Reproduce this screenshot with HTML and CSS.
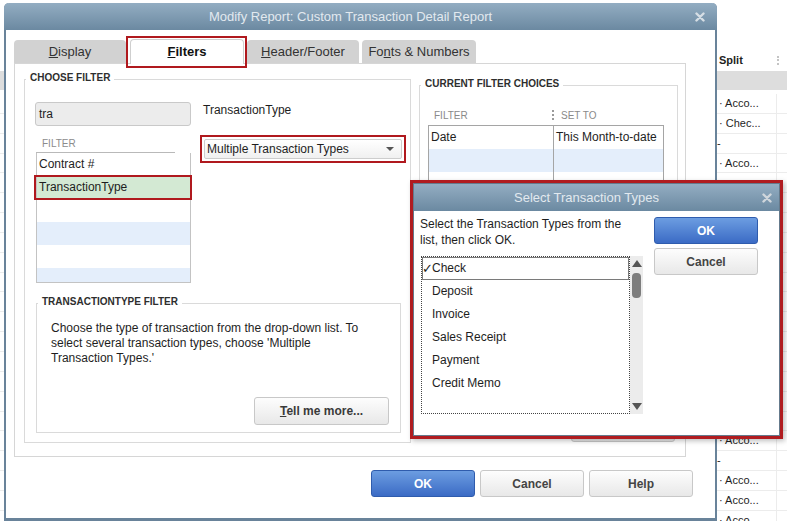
FILE: index.html
```html
<!DOCTYPE html>
<html lang="en">
<head>
<meta charset="UTF-8">
<meta name="viewport" content="width=device-width, initial-scale=1.0">
<title>Modify Report: Custom Transaction Detail Report</title>
<link rel="stylesheet" href="styles.css">
</head>
<body>

<!-- the report behind the dialogs, only its Split column is left uncovered -->
<div class="report">
    <div class="report-head"><span></span><span class="split">Split</span><span class="grip"></span></div>
    <div class="report-band"></div>
    <div class="report-row"><span></span><span class="split">· Acco...</span><span></span></div>
    <div class="report-row"><span></span><span class="split">· Chec...</span><span></span></div>
    <div class="report-row"><span></span><span class="split dash">-</span><span></span></div>
    <div class="report-row"><span></span><span class="split">· Acco...</span><span></span></div>
    <div class="report-row"><span></span><span class="split"></span><span></span></div>
    <div class="report-row"><span></span><span class="split"></span><span></span></div>
    <div class="report-row"><span></span><span class="split"></span><span></span></div>
    <div class="report-row"><span></span><span class="split"></span><span></span></div>
    <div class="report-row"><span></span><span class="split"></span><span></span></div>
    <div class="report-row"><span></span><span class="split"></span><span></span></div>
    <div class="report-row"><span></span><span class="split"></span><span></span></div>
    <div class="report-row"><span></span><span class="split"></span><span></span></div>
    <div class="report-row"><span></span><span class="split"></span><span></span></div>
    <div class="report-row"><span></span><span class="split"></span><span></span></div>
    <div class="report-row"><span></span><span class="split"></span><span></span></div>
    <div class="report-row"><span></span><span class="split"></span><span></span></div>
    <div class="report-row"><span></span><span class="split"></span><span></span></div>
    <div class="report-row"><span></span><span class="split">· Acco...</span><span></span></div>
    <div class="report-row"><span></span><span class="split dash">-</span><span></span></div>
    <div class="report-row"><span></span><span class="split">· Acco...</span><span></span></div>
    <div class="report-row"><span></span><span class="split">· Acco...</span><span></span></div>
    <div class="report-row"><span></span><span class="split">· Acco...</span><span></span></div>
</div>

<div class="window modify">
    <div class="titlebar">
        <span class="title">Modify Report: Custom Transaction Detail Report</span>
        <span class="close"><svg width="10" height="10" viewBox="0 0 10 10"><path d="M1.5 1.5 8.5 8.5M8.5 1.5 1.5 8.5" stroke="#d6dee5" stroke-width="2.4" stroke-linecap="round"/></svg></span>
    </div>
    <div class="window-body">
        <div class="tabs">
            <div class="tab"><u>D</u>isplay</div>
            <div class="tab active"><u>F</u>ilters</div>
            <div class="tab"><u>H</u>eader/Footer</div>
            <div class="tab">Fo<u>n</u>ts &amp; Numbers</div>
        </div>

        <div class="panel">
            <div class="group choose">
                <div class="group-title">CHOOSE FILTER</div>
                <div class="choose-grid">
                    <div>
                        <div class="search">tra</div>
                        <div class="list-head">FILTER</div>
                        <div class="filter-list">
                            <div class="row">Contract #</div>
                            <div class="row picked">TransactionType</div>
                            <div class="row"></div>
                            <div class="row alt"></div>
                            <div class="row"></div>
                            <div class="row alt last"></div>
                        </div>
                    </div>
                    <div>
                        <div class="value-label">TransactionType</div>
                        <div class="combo-mark">
                            <div class="combo">Multiple Transaction Types<span class="caret"></span></div>
                        </div>
                    </div>
                </div>
                <div class="group help-group">
                    <div class="group-title">TRANSACTIONTYPE FILTER</div>
                    <p class="help-text">Choose the type of transaction from the drop-down list. To<br>select several transaction types, choose 'Multiple<br>Transaction Types.'</p>
                    <div class="btn tell"><span><u>T</u>ell me more...</span></div>
                </div>
            </div>

            <div class="current-col">
                <div class="group choices">
                    <div class="group-title">CURRENT FILTER CHOICES</div>
                    <div class="choice-head"><span>FILTER</span><span class="set-to">SET TO</span></div>
                    <div class="choice-table">
                        <div class="choice-row"><span>Date</span><span>This Month-to-date</span></div>
                        <div class="choice-row alt"><span></span><span></span></div>
                        <div class="choice-row"><span></span><span></span></div>
                        <div class="choice-row alt"><span></span><span></span></div>
                        <div class="choice-row"><span></span><span></span></div>
                        <div class="choice-row alt"><span></span><span></span></div>
                        <div class="choice-row"><span></span><span></span></div>
                        <div class="choice-row alt"><span></span><span></span></div>
                        <div class="choice-row"><span></span><span></span></div>
                        <div class="choice-row alt"><span></span><span></span></div>
                        <div class="choice-row"><span></span><span></span></div>
                    </div>
                </div>
                <div class="btn remove">Remove Selected Filter</div>
            </div>
        </div>

        <div class="footer">
            <div class="btn primary">OK</div>
            <div class="btn">Cancel</div>
            <div class="btn">Help</div>
        </div>
    </div>
</div>

<div class="popup-mark">
    <div class="window types">
        <div class="titlebar">
            <span class="title">Select Transaction Types</span>
            <span class="close"><svg width="10" height="10" viewBox="0 0 10 10"><path d="M1.5 1.5 8.5 8.5M8.5 1.5 1.5 8.5" stroke="#cfd6dc" stroke-width="2.4" stroke-linecap="round"/></svg></span>
        </div>
        <div class="types-body">
            <div class="types-left">
                <p class="types-text">Select the Transaction Types from the<br>list, then click OK.</p>
                <div class="type-list">
                    <div class="type-items">
                        <div class="type-item selected"><span class="tick">✓</span>Check</div>
                        <div class="type-item"><span class="tick"></span>Deposit</div>
                        <div class="type-item"><span class="tick"></span>Invoice</div>
                        <div class="type-item"><span class="tick"></span>Sales Receipt</div>
                        <div class="type-item"><span class="tick"></span>Payment</div>
                        <div class="type-item"><span class="tick"></span>Credit Memo</div>
                    </div>
                    <div class="type-scroll">
                        <span class="arrow-up"></span>
                        <span class="thumb"></span>
                        <span class="arrow-down"></span>
                    </div>
                </div>
            </div>
            <div class="types-right">
                <div class="btn primary">OK</div>
                <div class="btn">Cancel</div>
            </div>
        </div>
    </div>
</div>

</body>
</html>
```

FILE: styles.css
```css
body {
    margin: 0;
    width: 787px;
    height: 521px;
    overflow: hidden;
    position: relative;
    background: #fff;
    color: #1e1e1e;
    font-family: "Liberation Sans", Arial, sans-serif;
    font-size: 12px;
}

/* report in the back */
.report {
    padding-top: 49px;
}

.report-head,
.report-row {
    display: grid;
    grid-template-columns: 1fr 61px 10px;
}

.report-head {
    height: 22px;
    align-items: center;
    font-size: 11px;
    font-weight: bold;
}

.report-head .grip {
    width: 0;
    height: 9px;
    border-left: 2px dotted #c4c4c4;
}

.report-band {
    height: 19px;
    margin-bottom: 4px;
    background: #dddddd;
}

.report-row {
    height: 19.85px;
    box-sizing: border-box;
    border-bottom: 1px solid #ececec;
    line-height: 19px;
    font-size: 11px;
}

.split {
    padding-left: 3px;
    white-space: nowrap;
}

.report-row .split {
    border-right: 1px solid #ececec;
}

.split.dash {
    padding-left: 1px;
}

/* windows */
.window {
    background: #fff;
    box-sizing: border-box;
}

.modify {
    position: absolute;
    left: 4px;
    top: 3px;
    width: 713px;
    height: 518px;
    border: 2px solid #69839a;
    border-top: 0;
    border-bottom-width: 3px;
    border-radius: 5px 5px 0 0;
}

.titlebar {
    display: flex;
    align-items: center;
    height: 27px;
    padding-left: 7px;
    background: linear-gradient(#93adc2, #6b89a1);
    color: #e2e9ef;
    font-size: 13px;
}

.modify .titlebar {
    margin: 0 -2px;
    border-radius: 5px 5px 0 0;
}

.title {
    flex: 1;
    text-align: center;
}

.close {
    display: flex;
    justify-content: center;
    width: 20px;
    margin-right: 7px;
}

.window-body {
    padding-top: 9px;
}

/* tabs */
.tabs {
    display: flex;
    align-items: flex-end;
    height: 24px;
    margin-left: 8px;
}

.tab {
    width: 112px;
    height: 23px;
    margin-left: 3px;
    box-sizing: border-box;
    border-radius: 4px 4px 0 0;
    background: #d2d2d2;
    color: #333;
    font-size: 13px;
    line-height: 23px;
    text-align: center;
}

.tab:first-child {
    margin-left: 0;
}

.tab:last-child {
    width: 114px;
}

.tab.active {
    position: relative;
    z-index: 1;
    width: 114px;
    height: 25px;
    margin-left: 4px;
    margin-bottom: -1px;
    border: 1px solid #cfcfcf;
    border-bottom: 0;
    background: #fff;
    color: #111;
    font-weight: bold;
}

.tab.active::after {
    content: "";
    position: absolute;
    left: -5px;
    right: -4px;
    top: -4px;
    bottom: -4px;
    border: 2px solid #b0191e;
}

/* filters panel */
.panel {
    display: grid;
    grid-template-columns: 387px 259px;
    column-gap: 8px;
    align-items: start;
    width: 672px;
    height: 394px;
    margin-left: 8px;
    padding-left: 9px;
    box-sizing: border-box;
    border: 1px solid #d6d6d6;
}

.group {
    border: 1px solid #dadada;
}

.group-title {
    width: fit-content;
    padding: 0 4px;
    background: #fff;
    color: #2e2e2e;
    font-size: 10px;
    font-weight: bold;
    line-height: 12px;
}

.choose {
    margin-top: 15px;
    padding: 0 4px 9px 10px;
}

.choose > .group-title {
    margin: -8px 0 0 -9px;
}

.choose-grid {
    display: grid;
    grid-template-columns: 156px 206px;
    column-gap: 9px;
    margin-top: 18px;
}

.search {
    height: 24px;
    box-sizing: border-box;
    padding-left: 3px;
    border: 1px solid #c9c9c9;
    border-radius: 3px;
    background: #ececec;
    line-height: 22px;
}

.list-head {
    width: 139px;
    height: 22px;
    margin: 5px 0 0 1px;
    padding: 4px 0 0 6px;
    box-sizing: border-box;
    border-bottom: 1px solid #b9b9b9;
    color: #8c8c8c;
    font-size: 10px;
    line-height: 17px;
}

.filter-list {
    width: 155px;
    height: 130px;
    margin-left: 1px;
    box-sizing: border-box;
    border: 1px solid #c3c3c3;
    border-top: 0;
}

.row {
    height: 23px;
    padding-left: 2px;
    line-height: 23px;
}

.row.alt {
    background: #e4eefb;
}

.row.last {
    height: 14px;
}

.row.picked {
    position: relative;
    background: #d3e9d3;
}

.row.picked::after {
    content: "";
    position: absolute;
    left: -3px;
    right: -2px;
    top: -1px;
    bottom: -1px;
    border: 2px solid #b0191e;
}

.value-label {
    padding-left: 3px;
    line-height: 16px;
}

.combo-mark {
    margin-top: 17px;
    padding: 2px;
    border: 2px solid #b0191e;
}

.combo {
    display: flex;
    align-items: center;
    justify-content: space-between;
    height: 20px;
    box-sizing: border-box;
    padding-left: 2px;
    border: 1px solid #cdcdcd;
    border-radius: 2px;
    background: linear-gradient(#fff, #f0f0f0);
    line-height: 18px;
}

.caret {
    width: 0;
    height: 0;
    margin-right: 7px;
    border-left: 4px solid transparent;
    border-right: 4px solid transparent;
    border-top: 4px solid #555;
}

.help-group {
    margin: 20px 5px 0 1px;
    padding: 0 11px 7px 14px;
}

.help-group > .group-title {
    margin: -8px 0 0 -13px;
}

.help-text {
    margin: 13px 0 0;
    line-height: 15px;
}

.btn {
    display: flex;
    align-items: center;
    justify-content: center;
    box-sizing: border-box;
    border: 1px solid #c8c8c8;
    border-radius: 3px;
    background: linear-gradient(#fdfdfd, #e8e8e8);
    color: #444;
    font-weight: bold;
    white-space: nowrap;
}

.btn.primary {
    border-color: #2f5cad;
    background: linear-gradient(#6c9de1, #3b6bc5);
    color: #fff;
}

.tell {
    width: 135px;
    height: 28px;
    margin: 31px 0 0 auto;
    color: #3a3a3a;
}

.current-col {
    display: flex;
    flex-direction: column;
}

.choices {
    height: 320px;
    margin-top: 21px;
    padding: 0 13px 0 8px;
    box-sizing: border-box;
}

.choices > .group-title {
    margin: -8px 0 0 -7px;
}

.choice-head {
    display: grid;
    grid-template-columns: 125px 1fr;
    height: 19px;
    margin-top: 16px;
    color: #8a8a8a;
    font-size: 10px;
    line-height: 19px;
}

.choice-head span:first-child {
    padding-left: 6px;
}

.set-to::before {
    content: "";
    display: inline-block;
    width: 2px;
    height: 10px;
    margin: 0 7px 0 -1px;
    vertical-align: -1px;
    background: repeating-linear-gradient(#9a9a9a 0 2px, transparent 2px 4px);
}

.choice-table {
    border: 1px solid #a5a5a5;
    border-bottom: 0;
}

.choice-row {
    display: grid;
    grid-template-columns: 125px 1fr;
    height: 23px;
    line-height: 23px;
}

.choice-row span {
    padding-left: 2px;
}

.choice-row span:first-child {
    border-right: 1px solid #a5a5a5;
}

.choice-row.alt {
    background: #e4eefb;
}

.remove {
    width: 104px;
    height: 27px;
    margin: 10px 3px 0 auto;
    font-size: 11px;
    line-height: 12px;
    text-align: center;
    white-space: normal;
}

.footer {
    display: flex;
    justify-content: flex-end;
    gap: 5px;
    margin-top: 13px;
    padding-right: 22px;
}

.footer .btn {
    width: 104px;
    height: 27px;
}

/* select transaction types popup */
.popup-mark {
    position: absolute;
    left: 410px;
    top: 180px;
    width: 373px;
    height: 259px;
    box-sizing: border-box;
    border: 3px solid #b01c20;
    box-shadow: 2px 2px 5px rgba(0, 0, 0, 0.25);
}

.types {
    height: 100%;
    border: 1px solid #657a8c;
}

.types .titlebar {
    padding-left: 2px;
}

.types .close {
    margin-right: 2px;
}

.types-body {
    display: flex;
    padding: 5px 0 0 6px;
}

.types-left {
    width: 224px;
}

.types-text {
    margin: 0;
    line-height: 16px;
}

.type-list {
    display: flex;
    height: 158px;
    margin: 8px 0 0 1px;
}

.type-items {
    width: 209px;
    box-sizing: border-box;
    border: 1px dotted #444;
}

.type-item {
    height: 23px;
    line-height: 23px;
}

.type-item.selected {
    box-shadow: inset 0 0 0 1px #7a7a7a;
}

.tick {
    display: inline-block;
    width: 10px;
    font-family: "DejaVu Sans", sans-serif;
    font-size: 13px;
    vertical-align: top;
}

.type-scroll {
    display: flex;
    flex-direction: column;
    align-items: center;
    width: 13px;
    background: #ececec;
}

.arrow-up,
.arrow-down {
    width: 0;
    height: 0;
    border-left: 5px solid transparent;
    border-right: 5px solid transparent;
}

.arrow-up {
    margin-top: 4px;
    border-bottom: 7px solid #555;
}

.arrow-down {
    margin: auto 0 4px;
    border-top: 7px solid #555;
}

.thumb {
    width: 9px;
    height: 25px;
    margin-top: 6px;
    border-radius: 4px;
    background: #7d7d7d;
}

.types-right {
    display: flex;
    flex-direction: column;
    gap: 4px;
    width: 104px;
    margin: 1px 0 0 10px;
}

.types-right .btn {
    height: 27px;
}
```
